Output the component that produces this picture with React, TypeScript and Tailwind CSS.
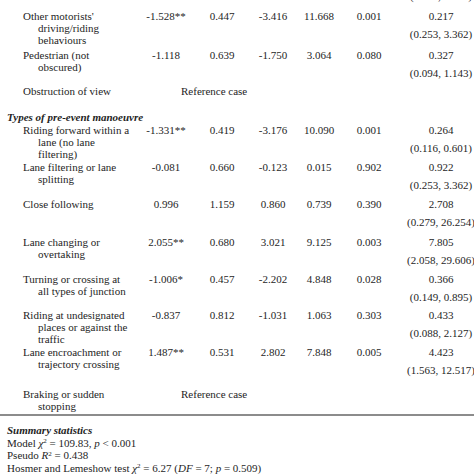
const cols = "grid grid-cols-[140px_52px_60px_42px_50px_50px_94px] items-start"

type Row = {
  label: string[]
  v?: string[]
  or?: string
  ci?: string
  h: string
}

const rows: Row[] = [
  {
    label: ["Other motorists'", "driving/riding", "behaviours"],
    v: ["-1.528**", "0.447", "-3.416", "11.668", "0.001"],
    or: "0.217",
    ci: "(0.253, 3.362)",
    h: "h-[39px]",
  },
  {
    label: ["Pedestrian (not", "obscured)"],
    v: ["-1.118", "0.639", "-1.750", "3.064", "0.080"],
    or: "0.327",
    ci: "(0.094, 1.143)",
    h: "h-[36px]",
  },
  { label: ["Obstruction of view"], h: "h-[26px]" },
]

const manoeuvres: Row[] = [
  {
    label: ["Riding forward within a", "lane (no lane", "filtering)"],
    v: ["-1.331**", "0.419", "-3.176", "10.090", "0.001"],
    or: "0.264",
    ci: "(0.116, 0.601)",
    h: "h-[37px]",
  },
  {
    label: ["Lane filtering or lane", "splitting"],
    v: ["-0.081", "0.660", "-0.123", "0.015", "0.902"],
    or: "0.922",
    ci: "(0.253, 3.362)",
    h: "h-[37px]",
  },
  {
    label: ["Close following"],
    v: ["0.996", "1.159", "0.860", "0.739", "0.390"],
    or: "2.708",
    ci: "(0.279, 26.254)",
    h: "h-[38px]",
  },
  {
    label: ["Lane changing or", "overtaking"],
    v: ["2.055**", "0.680", "3.021", "9.125", "0.003"],
    or: "7.805",
    ci: "(2.058, 29.606)",
    h: "h-[37px]",
  },
  {
    label: ["Turning or crossing at", "all types of junction"],
    v: ["-1.006*", "0.457", "-2.202", "4.848", "0.028"],
    or: "0.366",
    ci: "(0.149, 0.895)",
    h: "h-[36px]",
  },
  {
    label: ["Riding at undesignated", "places or against the", "traffic"],
    v: ["-0.837", "0.812", "-1.031", "1.063", "0.303"],
    or: "0.433",
    ci: "(0.088, 2.127)",
    h: "h-[37px]",
  },
  {
    label: ["Lane encroachment or", "trajectory crossing"],
    v: ["1.487**", "0.531", "2.802", "7.848", "0.005"],
    or: "4.423",
    ci: "(1.563, 12.517)",
    h: "h-[42px]",
  },
  { label: ["Braking or sudden", "stopping"], h: "h-[26px]" },
]

function TableRow({ row }: { row: Row }) {
  return (
    <div className={`${cols} ${row.h}`}>
      <div className="pl-[23px]">
        {row.label.map((line, i) => (
          <div key={i} className={i > 0 ? "pl-[15px]" : ""}>
            {line}
          </div>
        ))}
      </div>
      {row.v ? (
        <>
          {row.v.map((val, i) => (
            <div key={i} className="text-center">
              {val}
            </div>
          ))}
          <div className="flex flex-col items-center">
            <div>{row.or}</div>
            <div className="mt-[6px]">{row.ci}</div>
          </div>
        </>
      ) : (
        <div className="col-span-6 pl-[41px]">Reference case</div>
      )}
    </div>
  )
}

export default function App() {
  return (
    <div
      className="w-[474px] h-[474px] overflow-hidden bg-white text-[#1e1e1e] text-[11px] leading-[12px] whitespace-nowrap"
      style={{ fontFamily: '"Liberation Serif", "Times New Roman", serif' }}
    >
      <div className="w-[488px] -mt-[10px]">
        <div className={`${cols} h-[20px]`}>
          <div className="col-start-7 text-center">(0.112, 0.601)</div>
        </div>

        {rows.map((row, i) => (
          <TableRow key={i} row={row} />
        ))}

        <div className="h-[13px] pl-[7px] font-bold italic">Types of pre-event manoeuvre</div>

        {manoeuvres.map((row, i) => (
          <TableRow key={i} row={row} />
        ))}

        <div className="h-[2px] w-[474px] bg-[#8c8c8c]" />

        <div className="mt-[8px] pl-[7px] leading-[12.5px]">
          <div className="font-bold italic">Summary statistics</div>
          <div>
            Model <i>χ</i>
            <sup className="text-[7px] leading-none">2</sup> = 109.83, <i>p</i> &lt; 0.001
          </div>
          <div>
            Pseudo <i>R</i>
            <sup className="text-[7px] leading-none">2</sup> = 0.438
          </div>
          <div>
            Hosmer and Lemeshow test <i>χ</i>
            <sup className="text-[7px] leading-none">2</sup> = 6.27 (<i>DF</i> = 7; <i>p</i> = 0.509)
          </div>
        </div>
      </div>
    </div>
  )
}
